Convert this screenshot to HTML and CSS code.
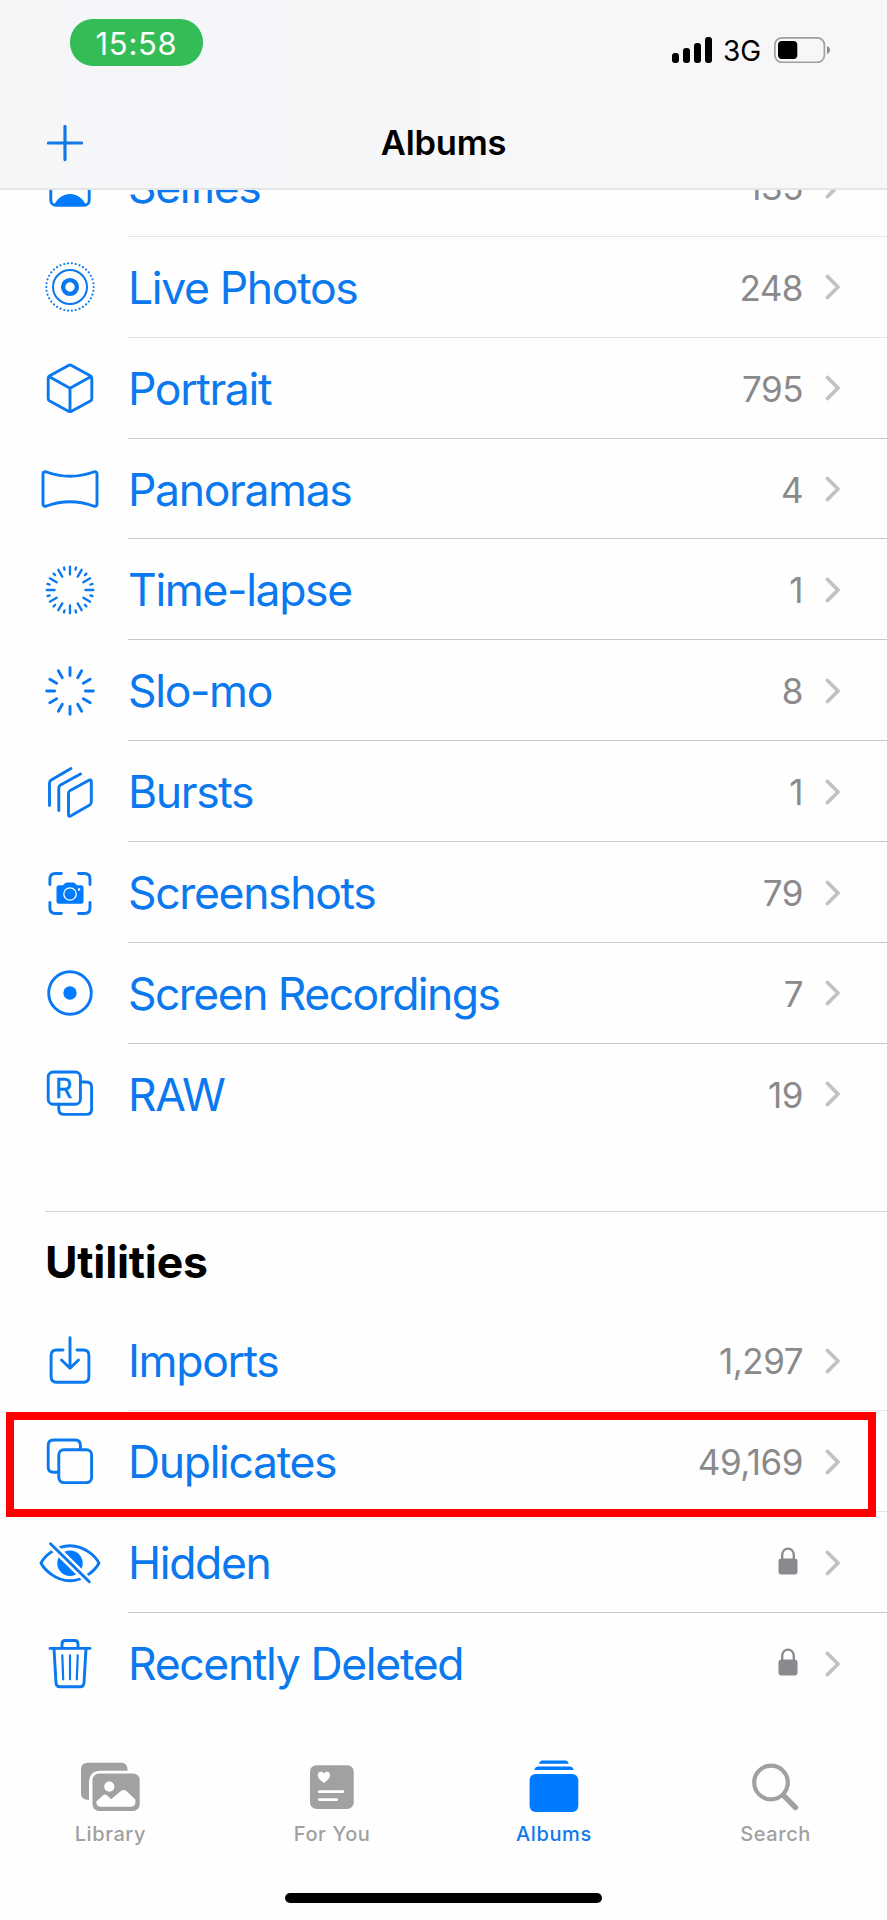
FILE: index.html
```html
<!DOCTYPE html>
<html lang="en">
<head>
    <meta charset="UTF-8">
    <meta name="viewport" content="width=device-width, initial-scale=1.0">
    <title>Albums</title>
    <link rel="stylesheet" href="styles.css">
</head>
<body>
    <div class="phone">
        <header class="header">
            <div class="status-bar">
                <span class="time">15:58</span>
                <div class="status-icons">
                    <svg class="signal" viewBox="0 0 40 26">
                        <rect x="0" y="16" width="7" height="10" rx="3"/>
                        <rect x="11" y="11" width="7" height="15" rx="3"/>
                        <rect x="22" y="6" width="7" height="20" rx="3"/>
                        <rect x="33" y="0" width="7" height="26" rx="3"/>
                    </svg>
                    <span class="network">3G</span>
                    <svg class="battery" viewBox="0 0 57 26">
                        <rect x="0.9" y="0.9" width="49.5" height="24.4" rx="7" fill="none" stroke="#a0a0a0" stroke-width="1.7"/>
                        <rect x="4" y="4" width="19.3" height="18" rx="4"/>
                        <path d="M53 9c4 1.5 4 6.500 0 8z" fill="#8c8c8c"/>
                    </svg>
                </div>
            </div>
            <div class="nav-bar">
                <svg class="plus" viewBox="0 0 36 36"><path d="M18 1.500v33M1.500 18h33"/></svg>
                <h1 class="title">Albums</h1>
            </div>
        </header>

        <main class="content">
            <ul class="list media-types">
                <li class="row light">
                    <svg class="icon" viewBox="0 0 64 64">
                        <rect x="12.800" y="11" width="38.400" height="40.300" rx="5"/>
                        <circle class="fill" cx="32" cy="27.500" r="8"/>
                        <path class="fill" d="M16 52c2-7 8.500-12 16-12s14 5 16 12z"/>
                    </svg>
                    <div class="cell"><span class="name">Selfies</span><span class="count">135</span><svg class="chevron" viewBox="0 0 16 26"><path d="M2.500 2.500 13 13 2.500 23.500"/></svg></div>
                </li>
                <li class="row light">
                    <svg class="icon" viewBox="0 0 64 64">
                        <circle cx="32" cy="32" r="6.900" stroke-width="4.400"/>
                        <circle cx="32" cy="32" r="17" stroke-width="2"/>
                        <circle cx="32" cy="32" r="23.700" stroke-width="2.200" pathLength="190" stroke-dasharray="0 5"/>
                    </svg>
                    <div class="cell"><span class="name">Live Photos</span><span class="count">248</span><svg class="chevron" viewBox="0 0 16 26"><path d="M2.500 2.500 13 13 2.500 23.500"/></svg></div>
                </li>
                <li class="row">
                    <svg class="icon" viewBox="0 0 64 64">
                        <path d="M30.500 9.500q1.500-.9 3 0l18.800 10.300q1.500.9 1.500 2.600v20q0 1.700-1.500 2.600l-18.800 10.200q-1.500.9-3 0l-18.800-10.200q-1.500-.9-1.500-2.600v-20q0-1.700 1.500-2.600zM11 20.500 32 32.300l21-11.800M32 32.300V55"/>
                    </svg>
                    <div class="cell"><span class="name">Portrait</span><span class="count">795</span><svg class="chevron" viewBox="0 0 16 26"><path d="M2.500 2.500 13 13 2.500 23.500"/></svg></div>
                </li>
                <li class="row">
                    <svg class="icon" viewBox="0 0 64 64">
                        <path d="M8.500 15Q32 23.500 55.500 15q3.500-1 3.500 2v30q0 3-3.500 2Q32 40.500 8.500 49 5 50 5 47V17q0-3 3.500-2z"/>
                    </svg>
                    <div class="cell"><span class="name">Panoramas</span><span class="count">4</span><svg class="chevron" viewBox="0 0 16 26"><path d="M2.500 2.500 13 13 2.500 23.500"/></svg></div>
                </li>
                <li class="row">
                    <svg class="icon" viewBox="0 0 64 64">
                        <g stroke-width="2.300">
                            <g id="ticks">
                                <g id="quarter">
                                    <path d="M32 8.700v7.900"/>
                                    <path d="M32 8.700v7.900" transform="rotate(30 32 32)"/>
                                    <path d="M32 8.700v7.900" transform="rotate(60 32 32)"/>
                                </g>
                                <use href="#quarter" transform="rotate(90 32 32)"/>
                                <use href="#quarter" transform="rotate(180 32 32)"/>
                                <use href="#quarter" transform="rotate(270 32 32)"/>
                            </g>
                            <g id="short">
                                <path d="M32 8.700v2.200" transform="rotate(15 32 32)"/>
                                <path d="M32 8.700v2.200" transform="rotate(45 32 32)"/>
                                <path d="M32 8.700v2.200" transform="rotate(75 32 32)"/>
                            </g>
                            <use href="#short" transform="rotate(90 32 32)"/>
                            <use href="#short" transform="rotate(180 32 32)"/>
                            <use href="#short" transform="rotate(270 32 32)"/>
                        </g>
                    </svg>
                    <div class="cell"><span class="name">Time-lapse</span><span class="count">1</span><svg class="chevron" viewBox="0 0 16 26"><path d="M2.500 2.500 13 13 2.500 23.500"/></svg></div>
                </li>
                <li class="row">
                    <svg class="icon" viewBox="0 0 64 64"><use href="#ticks"/></svg>
                    <div class="cell"><span class="name">Slo-mo</span><span class="count">8</span><svg class="chevron" viewBox="0 0 16 26"><path d="M2.500 2.500 13 13 2.500 23.500"/></svg></div>
                </li>
                <li class="row">
                    <svg class="icon" viewBox="0 0 64 64">
                        <path d="M11.500 45.500V23q0-2 1.700-3L33 8.600M20.800 50.500V28q0-2 1.700-3l20-11"/>
                        <path d="M32.200 30.500 51 20.200q2.300-1 2.300 1.400v20.500q0 1.900-1.600 2.900L33 55.800q-2.500 1.500-2.500-1.300V33.300q0-1.900 1.700-2.800z"/>
                    </svg>
                    <div class="cell"><span class="name">Bursts</span><span class="count">1</span><svg class="chevron" viewBox="0 0 16 26"><path d="M2.500 2.500 13 13 2.500 23.500"/></svg></div>
                </li>
                <li class="row">
                    <svg class="icon" viewBox="0 0 64 64">
                        <path d="M11.900 23.500V18q0-5.500 5.500-5.500h6M40.500 12.500h6q5.500 0 5.500 5.500v5.500M52 41.500V47q0 5.500-5.500 5.500h-6M23.400 52.500h-6q-5.500 0-5.500-5.500v-5.500"/>
                        <path class="fill" d="M21 24.200h4l2-2q.8-.8 2-.8h6q1.200 0 2 .8l2 2h4q2.500 0 2.500 2.500v13.500q0 2.500-2.500 2.500H21q-2.500 0-2.500-2.500V26.700q0-2.500 2.500-2.500z"/>
                        <circle cx="32" cy="33" r="6.200" stroke="#fff" stroke-width="1.300"/>
                        <circle cx="41" cy="28.500" r="1.300" fill="#fff" stroke="none"/>
                    </svg>
                    <div class="cell"><span class="name">Screenshots</span><span class="count">79</span><svg class="chevron" viewBox="0 0 16 26"><path d="M2.500 2.500 13 13 2.500 23.500"/></svg></div>
                </li>
                <li class="row">
                    <svg class="icon" viewBox="0 0 64 64">
                        <circle cx="32" cy="32" r="21.300"/>
                        <circle class="fill" cx="32" cy="32" r="6.700"/>
                    </svg>
                    <div class="cell"><span class="name long">Screen Recordings</span><span class="count">7</span><svg class="chevron" viewBox="0 0 16 26"><path d="M2.500 2.500 13 13 2.500 23.500"/></svg></div>
                </li>
                <li class="row">
                    <svg class="icon" viewBox="0 0 64 64">
                        <rect x="10.200" y="10" width="32.200" height="32.200" rx="5"/>
                        <path d="M42.400 20h6q5.200 0 5.200 5.200v22q0 5.200-5.200 5.200H26q-5.200 0-5.200-5.200v-5"/>
                        <text class="icon-letter" x="17" y="36">R</text>
                    </svg>
                    <div class="cell"><span class="name">RAW</span><span class="count">19</span><svg class="chevron" viewBox="0 0 16 26"><path d="M2.500 2.500 13 13 2.500 23.500"/></svg></div>
                </li>
            </ul>

            <section class="utilities">
                <h2 class="section-title">Utilities</h2>
                <ul class="list">
                    <li class="row light">
                        <svg class="icon" viewBox="0 0 64 64">
                            <path d="M25 21h-6.500q-5.400 0-5.400 5.400v21.400q0 5.400 5.400 5.400h27q5.400 0 5.400-5.400V26.400q0-5.400-5.400-5.400H39M32 8.800v29.500M23.500 31l8.500 8.300 8.500-8.300"/>
                        </svg>
                        <div class="cell"><span class="name">Imports</span><span class="count">1,297</span><svg class="chevron" viewBox="0 0 16 26"><path d="M2.500 2.500 13 13 2.500 23.500"/></svg></div>
                    </li>
                    <li class="row light highlighted">
                        <svg class="icon" viewBox="0 0 64 64">
                            <path d="M20.800 42.200H15.500q-5.300 0-5.300-5.300V15.300q0-5.300 5.300-5.300h21.600q5.300 0 5.300 5.300v4.500"/>
                            <rect x="20.800" y="19.800" width="32.800" height="32.800" rx="5"/>
                        </svg>
                        <div class="cell"><span class="name">Duplicates</span><span class="count">49,169</span><svg class="chevron" viewBox="0 0 16 26"><path d="M2.500 2.500 13 13 2.500 23.500"/></svg></div>
                    </li>
                    <li class="row">
                        <svg class="icon" viewBox="0 0 64 64">
                            <path d="M3 32C6 26 17 14.700 32 14.700S58 26 61 32C58 38 47 49.800 32 49.800S6 38 3 32z"/>
                            <circle class="fill" cx="32" cy="32.200" r="12.700"/>
                            <path d="M9.500 9.900 54.500 54" stroke="#fff" stroke-width="8"/>
                            <path d="M12.500 12.800 51.300 50.800"/>
                        </svg>
                        <div class="cell"><span class="name">Hidden</span><svg class="lock" viewBox="0 0 20 28"><path d="M4.200 13V8c0-8.500 11.600-8.500 11.600 0v5" fill="none" stroke="#8a8a8e" stroke-width="2.300"/><rect x="0.500" y="11.500" width="19" height="16" rx="3"/></svg><svg class="chevron" viewBox="0 0 16 26"><path d="M2.500 2.500 13 13 2.500 23.500"/></svg></div>
                    </li>
                    <li class="row">
                        <svg class="icon" viewBox="0 0 64 64">
                            <path d="M12 16.400h40M24 16V12q0-3.500 3.500-3.500h9q3.500 0 3.500 3.500v4M16 16.800l2 34q.3 4 4 4h20q3.700 0 4-4l2-34"/>
                            <path d="m24.300 23.300.9 24M32 23.300v24M39.700 23.300l-.9 24" stroke-width="2.200"/>
                        </svg>
                        <div class="cell"><span class="name">Recently Deleted</span><svg class="lock" viewBox="0 0 20 28"><path d="M4.200 13V8c0-8.500 11.600-8.500 11.600 0v5" fill="none" stroke="#8a8a8e" stroke-width="2.300"/><rect x="0.500" y="11.500" width="19" height="16" rx="3"/></svg><svg class="chevron" viewBox="0 0 16 26"><path d="M2.500 2.500 13 13 2.500 23.500"/></svg></div>
                    </li>
                </ul>
            </section>
        </main>

        <footer class="footer">
            <nav class="tabs">
                <div class="tab">
                    <svg class="tab-icon" viewBox="0 0 64 64">
                        <path d="M8.500 6.700h34q6 0 6.200 8H22q-12 0-12 12V44q-8 0-8-6.500V13.200q0-6.500 6.500-6.500z"/>
                        <rect x="13.500" y="17.500" width="47.200" height="37.500" rx="6.500"/>
                        <g fill="#fff">
                            <circle cx="30.300" cy="30.700" r="5.100"/>
                            <path d="m17.300 45.500 6.500-6q2.200-1.800 4.400 0l4 3.800 9.800-8.300q2.700-2.200 5.400 0l9 8.500v2.500q0 4.800-5 4.800H22q-4.700 0-4.700-4.700z"/>
                        </g>
                    </svg>
                    <span class="tab-label">Library</span>
                </div>
                <div class="tab">
                    <svg class="tab-icon" viewBox="0 0 64 64">
                        <rect x="9" y="9.200" width="43.700" height="43.800" rx="6.500"/>
                        <path fill="#fff" d="M22.900 27c-3.500-2.400-6.200-5-6.200-8 0-3.500 4.600-4.600 6.200-1.300 1.600-3.300 6.200-2.200 6.200 1.300 0 3-2.700 5.600-6.200 8z"/>
                        <path d="M18.300 35.700h23.500M18.300 43.600h17.500" stroke="#fff" stroke-width="2.700" stroke-linecap="round"/>
                    </svg>
                    <span class="tab-label">For You</span>
                </div>
                <div class="tab active">
                    <svg class="tab-icon" viewBox="0 0 64 64">
                        <path d="M17 7.800q.8-3.200 3.500-3.200h22.700q2.700 0 3.500 3.200zM12.300 14q1-3.400 4-3.400h31.400q3 0 4 3.400z"/>
                        <rect x="7.600" y="18" width="48.700" height="38" rx="6"/>
                    </svg>
                    <span class="tab-label">Albums</span>
                </div>
                <div class="tab">
                    <svg class="tab-icon" viewBox="0 0 64 64">
                        <g fill="none" stroke="#a1a1a1" stroke-linecap="round">
                            <circle cx="27" cy="26.500" r="16.800" stroke-width="4.200"/>
                            <path d="m39.500 39.300 12 12.200" stroke-width="5.400"/>
                        </g>
                    </svg>
                    <span class="tab-label">Search</span>
                </div>
            </nav>
            <div class="home-indicator"></div>
        </footer>
    </div>
</body>
</html>
```
FILE: styles.css
```css
* {
    box-sizing: border-box;
}
body {
    margin: 0;
    background: #fefefe;
    font-family: Inter, "Liberation Sans", sans-serif;
}
svg {
    display: block;
    flex-shrink: 0;
}
.phone {
    display: flex;
    flex-direction: column;
    width: 887px;
    height: 1920px;
    overflow: hidden;
}

/* Header */
.header {
    height: 190px;
    flex-shrink: 0;
    background: linear-gradient(90deg, #f4f6f8 0%, #f5f6f9 25%, #f7f7f7 55%);
    border-bottom: 2px solid #e4e5e6;
}
.status-bar {
    display: flex;
    justify-content: space-between;
    align-items: flex-start;
    padding: 19px 56px 0 70px;
    height: 100px;
}
.time {
    width: 133px;
    height: 47px;
    border-radius: 23px;
    background: #34bc56;
    color: white;
    font-size: 31px;
    line-height: 49px;
    text-align: center;
    letter-spacing: 0.700px;
}
.status-icons {
    display: flex;
    align-items: center;
    height: 26px;
    margin-top: 18px;
}
.signal {
    width: 40px;
    height: 26px;
}
.network {
    width: 62px;
    padding: 2px 0 0 11px;
    font-size: 28px;
    letter-spacing: -0.100px;
}
.battery {
    width: 57px;
    height: 26px;
}
.nav-bar {
    display: grid;
    grid-template-columns: 1fr auto 1fr;
    align-items: center;
    height: 86px;
    padding: 0 47px;
}
.plus {
    width: 36px;
    height: 36px;
    fill: none;
    stroke: #1478e4;
    stroke-width: 3.200;
    stroke-linecap: round;
}
.title {
    margin: 0 0 1px;
    font-size: 34.500px;
    font-weight: 600;
    letter-spacing: -0.250px;
}

/* Album lists */
.content {
    flex: 1;
    min-height: 0;
    overflow: hidden;
}
.list {
    list-style: none;
    margin: 0;
    padding: 0;
}
.media-types {
    /* scrolled partly under the header */
    margin-top: -54.100px;
}
.row {
    position: relative;
    display: flex;
    align-items: center;
    height: 100.900px;
    padding-left: 38px;
}
.icon {
    width: 64px;
    height: 64px;
    margin-right: 26px;
    fill: none;
    stroke: #0a78ee;
    stroke-width: 2.900;
    stroke-linecap: round;
    stroke-linejoin: round;
}
.icon .fill {
    fill: #007aff;
    stroke: none;
}
.icon-letter {
    fill: #0a78ee;
    stroke: #0a78ee;
    stroke-width: 0.400;
    font-size: 27px;
}
.cell {
    display: flex;
    align-items: center;
    flex: 1;
    height: 100%;
    padding: 1px 46px 0 0;
    border-bottom: 1px solid #c8c8ca;
}
.light .cell {
    border-color: #e4e4e6;
}
.row:last-child .cell {
    border-color: transparent;
}
.name {
    flex: 1;
    padding-top: 1px;
    color: #0a78ee;
    font-size: 44.500px;
    letter-spacing: -1.350px;
    white-space: nowrap;
}
.name.long {
    letter-spacing: -1.550px;
}
.count {
    padding-top: 1px;
    color: #8a8a8c;
    font-size: 35px;
    letter-spacing: -0.500px;
}
.chevron {
    width: 16px;
    height: 26px;
    margin-left: 22px;
    fill: none;
    stroke: #c2c2c4;
    stroke-width: 3.800;
    stroke-linecap: round;
    stroke-linejoin: round;
}
.lock {
    width: 20px;
    height: 28px;
    margin: 0 5px 4px 0;
    fill: #8a8a8e;
}
.highlighted::after {
    content: "";
    box-sizing: border-box;
    position: absolute;
    top: 1px;
    left: 6px;
    width: 870px;
    height: 105px;
    border: 8px solid #ff0000;
    z-index: 1;
}

/* Utilities */
.utilities {
    margin-top: 66px;
}
.section-title {
    height: 99.600px;
    margin: 0 0 0 45px;
    border-top: 1px solid #d4d4d6;
    font-size: 44.500px;
    font-weight: 700;
    line-height: 101px;
    letter-spacing: -0.250px;
}

/* Tab bar */
.footer {
    height: 174px;
    flex-shrink: 0;
}
.tabs {
    display: flex;
    height: 147px;
    padding-top: 10px;
}
.tab {
    flex: 1;
    display: flex;
    flex-direction: column;
    align-items: center;
    color: #a1a1a1;
    fill: #a1a1a1;
}
.tab.active {
    color: #147aea;
    fill: #007aff;
}
.tab-icon {
    width: 64px;
    height: 64px;
}
.tab-label {
    padding-right: 1px;
    font-size: 20px;
    font-weight: 500;
    line-height: 28px;
    letter-spacing: 0.600px;
}
.home-indicator {
    width: 317px;
    height: 10px;
    margin: 0 auto;
    border-radius: 5px;
    background: black;
}
```
